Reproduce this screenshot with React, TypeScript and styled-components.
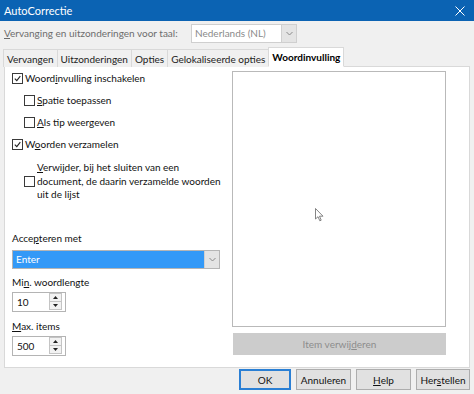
import React from "react";
import styled, { createGlobalStyle } from "styled-components";

const GlobalStyle = createGlobalStyle`
  html, body {
    margin: 0;
    padding: 0;
    background: #f0f0f0;
  }
  body {
    font-family: Lato, "Noto Sans", sans-serif;
    font-size: 10px;
    color: #111;
    white-space: nowrap;
  }
`;

const Window = styled.div`
  position: relative;
  width: 474px;
  height: 394px;
  background: #f0f0f0;
  display: flex;
  flex-direction: column;
  overflow: hidden;
`;

const TitleBar = styled.div`
  height: 21px;
  background: #0b63b3;
  color: #fff;
  display: flex;
  align-items: center;
  justify-content: space-between;
  padding: 0 9px 0 4px;
  font-size: 11px;
`;

const LangRow = styled.div`
  display: flex;
  align-items: center;
  height: 20px;
  margin-top: 2px;
  padding-left: 4px;
`;

const MutedLabel = styled.span`
  color: #6d6d6d;
  width: 187px;
`;

const Combo = styled.div<{ $width: number; $active?: boolean }>`
  width: ${(p) => p.$width}px;
  height: 19px;
  box-sizing: border-box;
  display: flex;
  align-items: stretch;
  border: 1px solid ${(p) => (p.$active ? "#b5b5b5" : "#cfcfcf")};
  background: ${(p) => (p.$active ? "#3399f7" : "#fff")};
  color: ${(p) => (p.$active ? "#fff" : "#8a8a8a")};
`;

const ComboText = styled.span`
  flex: 1;
  display: flex;
  align-items: center;
  padding-left: 3px;
`;

const ComboButton = styled.span`
  width: 14px;
  background: #e4e4e4;
  border-left: 1px solid #d0d0d0;
  display: flex;
  align-items: center;
  justify-content: center;
`;

const TabStrip = styled.div`
  display: flex;
  align-items: flex-end;
  height: 21px;
  margin-top: 3px;
  padding-left: 4px;
  position: relative;
  z-index: 1;
`;

const Tab = styled.div<{ $selected?: boolean }>`
  height: ${(p) => (p.$selected ? 20 : 18)}px;
  box-sizing: border-box;
  padding: 0 3px;
  display: flex;
  align-items: center;
  border: 1px solid #d9d9d9;
  border-bottom: ${(p) => (p.$selected ? "1px solid #fff" : "none")};
  margin-left: -1px;
  background: ${(p) => (p.$selected ? "#fff" : "#f0f0f0")};
  font-weight: ${(p) => (p.$selected ? 700 : 400)};
  color: ${(p) => (p.$selected ? "#000" : "#222")};
`;

const Panel = styled.div`
  margin: -1px 4px 0 4px;
  height: 302px;
  box-sizing: border-box;
  background: #fff;
  border: 1px solid #d9d9d9;
  display: flex;
  padding: 0 23px 0 7px;
  gap: 12px;
`;

const LeftCol = styled.div`
  width: 208px;
  display: flex;
  flex-direction: column;
`;

const RightCol = styled.div`
  flex: 1;
  display: flex;
  flex-direction: column;
  padding-top: 4px;
`;

const CheckRow = styled.label<{ $indent?: boolean }>`
  display: flex;
  align-items: center;
  height: 22px;
  padding-left: ${(p) => (p.$indent ? 12 : 0)}px;
  gap: 2px;
`;

const MultiRow = styled.label`
  display: flex;
  align-items: center;
  padding-left: 12px;
  margin-top: 6px;
  gap: 2px;
  line-height: 13.5px;
`;

const Box = styled.span`
  width: 9px;
  height: 9px;
  flex: none;
  border: 1px solid #3a3a3a;
  background: #fff;
  display: flex;
  align-items: center;
  justify-content: center;
`;

const FieldLabel = styled.div<{ $top: number }>`
  margin-top: ${(p) => p.$top}px;
  height: 14px;
  line-height: 14px;
`;

const SelectWrap = styled.div`
  margin-top: 5px;
`;

const Spin = styled.div`
  margin-top: 3px;
  width: 54px;
  height: 20px;
  box-sizing: border-box;
  border: 1px solid #b4b4b4;
  background: #fff;
  display: flex;
  align-items: center;
  padding: 0 1px 0 4px;
`;

const SpinValue = styled.span`
  flex: 1;
`;

const SpinButtons = styled.div`
  width: 11px;
  height: 15px;
  border: 1px solid #c4c4c4;
  display: flex;
  flex-direction: column;
  margin-right: 2px;
`;

const SpinHalf = styled.div`
  flex: 1;
  display: flex;
  align-items: center;
  justify-content: center;
  background: #f2f2f2;
  & + & {
    border-top: 1px solid #c4c4c4;
  }
`;

const ListBox = styled.div`
  height: 256px;
  box-sizing: border-box;
  border: 1px solid #b9b9b9;
  background: #fff;
`;

const WideButton = styled.div`
  margin: 6px 0 0 1px;
  height: 22px;
  background: #cccccc;
  color: #8c8c8c;
  display: flex;
  align-items: center;
  justify-content: center;
`;

const Footer = styled.div`
  display: flex;
  justify-content: flex-end;
  gap: 5px;
  padding: 1px 4px 0 0;
`;

const DialogButton = styled.div<{ $default?: boolean; $width: number }>`
  width: ${(p) => p.$width}px;
  height: 21px;
  box-sizing: border-box;
  display: flex;
  align-items: center;
  justify-content: center;
  background: #e1e1e1;
  border: ${(p) => (p.$default ? "2px solid #2a7fd4" : "1px solid #adadad")};
`;

const Cursor = styled.svg`
  position: absolute;
  left: 315px;
  top: 208px;
`;

const Chevron = () => (
  <svg width="7" height="5" viewBox="0 0 7 5">
    <path d="M0.5 1 L3.5 4 L6.5 1" fill="none" stroke="#8a8a8a" strokeWidth="1" />
  </svg>
);

const Check = () => (
  <svg width="7" height="7" viewBox="0 0 7 7">
    <path d="M0.8 3.6 L2.8 5.6 L6.3 1.2" fill="none" stroke="#222" strokeWidth="1.1" />
  </svg>
);

const Arrow = ({ up }: { up?: boolean }) => (
  <svg width="5" height="3" viewBox="0 0 5 3">
    <path d={up ? "M0 3 L2.5 0 L5 3 Z" : "M0 0 L2.5 3 L5 0 Z"} fill="#222" />
  </svg>
);

const CheckBox = ({ checked }: { checked?: boolean }) => <Box>{checked && <Check />}</Box>;

const SpinBox = ({ value }: { value: string }) => (
  <Spin>
    <SpinValue>{value}</SpinValue>
    <SpinButtons>
      <SpinHalf>
        <Arrow up />
      </SpinHalf>
      <SpinHalf>
        <Arrow />
      </SpinHalf>
    </SpinButtons>
  </Spin>
);

const tabs = ["Vervangen", "Uitzonderingen", "Opties", "Gelokaliseerde opties", "Woordinvulling"];

export default function App() {
  return (
    <Window>
      <GlobalStyle />
      <TitleBar>
        <span>AutoCorrectie</span>
        <svg width="10" height="10" viewBox="0 0 10 10">
          <path d="M0.5 0.5 L9.5 9.5 M9.5 0.5 L0.5 9.5" stroke="#fff" strokeWidth="1" />
        </svg>
      </TitleBar>

      <LangRow>
        <MutedLabel>
          <u>V</u>ervanging en uitzonderingen voor taal:
        </MutedLabel>
        <Combo $width={106}>
          <ComboText>Nederlands (NL)</ComboText>
          <ComboButton>
            <Chevron />
          </ComboButton>
        </Combo>
      </LangRow>

      <TabStrip>
        {tabs.map((t) => (
          <Tab key={t} $selected={t === "Woordinvulling"}>
            {t}
          </Tab>
        ))}
      </TabStrip>

      <Panel>
        <LeftCol>
          <CheckRow>
            <CheckBox checked />
            <span>
              Woord<u>i</u>nvulling inschakelen
            </span>
          </CheckRow>
          <CheckRow $indent>
            <CheckBox />
            <span>
              <u>S</u>patie toepassen
            </span>
          </CheckRow>
          <CheckRow $indent>
            <CheckBox />
            <span>
              <u>A</u>ls tip weergeven
            </span>
          </CheckRow>
          <CheckRow>
            <CheckBox checked />
            <span>
              W<u>o</u>orden verzamelen
            </span>
          </CheckRow>
          <MultiRow>
            <CheckBox />
            <span>
              <u>V</u>erwijder, bij het sluiten van een
              <br />
              document, de daarin verzamelde woorden
              <br />
              uit de lijst
            </span>
          </MultiRow>

          <FieldLabel $top={29}>
            Acce<u>p</u>teren met
          </FieldLabel>
          <SelectWrap>
            <Combo $width={208} $active>
              <ComboText>Enter</ComboText>
              <ComboButton>
                <Chevron />
              </ComboButton>
            </Combo>
          </SelectWrap>

          <FieldLabel $top={6}>
            Mi<u>n</u>. woordlengte
          </FieldLabel>
          <SpinBox value="10" />

          <FieldLabel $top={7}>
            <u>M</u>ax. items
          </FieldLabel>
          <SpinBox value="500" />
        </LeftCol>

        <RightCol>
          <ListBox />
          <WideButton>
            Item verwij<u>d</u>eren
          </WideButton>
        </RightCol>
      </Panel>

      <Footer>
        <DialogButton $default $width={52}>
          OK
        </DialogButton>
        <DialogButton $width={55}>Annuleren</DialogButton>
        <DialogButton $width={55}>
          <u>H</u>elp
        </DialogButton>
        <DialogButton $width={54}>
          Her<u>s</u>tellen
        </DialogButton>
      </Footer>

      <Cursor width="9" height="15" viewBox="0 0 9 15">
        <path
          d="M0.5 0.5 L0.5 11 L3 8.7 L4.8 12.8 L6.2 12.2 L4.5 8.2 L8 8.2 Z"
          fill="#fff"
          stroke="#666"
          strokeWidth="0.8"
        />
      </Cursor>
    </Window>
  );
}
